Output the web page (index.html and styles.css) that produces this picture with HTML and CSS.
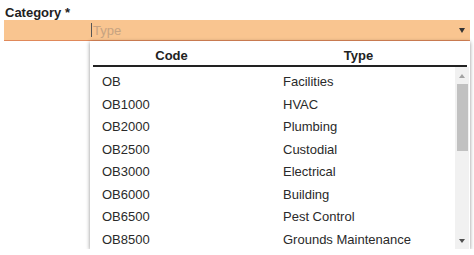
FILE: index.html
```html
<!DOCTYPE html>
<html lang="en">
<head>
  <meta charset="UTF-8">
  <title>Category</title>
  <link rel="stylesheet" href="styles.css">
</head>
<body>
  <div class="field">
    <label class="field-label">Category *</label>
    <div class="combo">
      <span class="caret"></span>
      <span class="placeholder">Type</span>
      <span class="combo-arrow"></span>
    </div>

    <!-- Dropdown list -->
    <div class="dropdown">
      <div class="dropdown-head">
        <div>Code</div>
        <div>Type</div>
      </div>
      <div class="dropdown-main">
        <div class="dropdown-body">
          <div class="row"><span class="cell-code">OB</span><span>Facilities</span></div>
          <div class="row"><span class="cell-code">OB1000</span><span>HVAC</span></div>
          <div class="row"><span class="cell-code">OB2000</span><span>Plumbing</span></div>
          <div class="row"><span class="cell-code">OB2500</span><span>Custodial</span></div>
          <div class="row"><span class="cell-code">OB3000</span><span>Electrical</span></div>
          <div class="row"><span class="cell-code">OB6000</span><span>Building</span></div>
          <div class="row"><span class="cell-code">OB6500</span><span>Pest Control</span></div>
          <div class="row"><span class="cell-code">OB8500</span><span>Grounds Maintenance</span></div>
        </div>
        <div class="scrollbar">
          <div class="scroll-btn"><span class="tri-up"></span></div>
          <div class="scroll-thumb"></div>
          <div class="scroll-space"></div>
          <div class="scroll-btn"><span class="tri-down"></span></div>
        </div>
      </div>
    </div>
  </div>
</body>
</html>
```

FILE: styles.css
```css
/* Reset */
* {
  margin: 0;
  padding: 0;
  box-sizing: border-box;
}

body {
  font-family: "Liberation Sans", Arial, sans-serif;
  color: #2a2a2a;
  background: #fff;
}

.field {
  padding: 0 4px;
}

.field-label {
  display: block;
  padding: 5px 0 0 1px;
  height: 20px;
  line-height: 15px;
  font-size: 13px;
  font-weight: bold;
  color: #222;
}

/* Combo input */
.combo {
  display: flex;
  align-items: center;
  height: 21px;
  padding-left: 87px;
  background-color: #f9c590;
  border-bottom: 1px solid #e0895a;
}

.caret {
  width: 1px;
  height: 14px;
  background-color: #555;
  margin-right: 1px;
}

.placeholder {
  flex: 1;
  font-size: 13px;
  color: #c7a381;
}

.combo-arrow {
  width: 0;
  height: 0;
  margin-right: 5px;
  border-left: 3.5px solid transparent;
  border-right: 3.5px solid transparent;
  border-top: 5px solid #333;
}

/* Dropdown */
.dropdown {
  display: flex;
  flex-direction: column;
  margin-left: 86px;
  width: 380px;
  height: 208px;
  padding: 0 3px;
  background: #fff;
  box-shadow: 0 1px 4px rgba(0, 0, 0, 0.45);
  overflow: hidden;
}

.dropdown-head {
  display: grid;
  grid-template-columns: 157px 1fr;
  flex: none;
  height: 26px;
  padding-top: 5px;
  line-height: 19px;
  font-size: 13px;
  font-weight: bold;
  color: #222;
  text-align: center;
  border-bottom: 2px solid #222;
}

.dropdown-main {
  display: flex;
  flex: 1;
  min-height: 0;
  margin-right: -2px;
}

.dropdown-body {
  flex: 1;
  padding-top: 4px;
  overflow: hidden;
}

.row {
  display: flex;
  height: 22.5px;
  line-height: 22.5px;
  font-size: 13px;
}

.cell-code {
  width: 190px;
  padding-left: 9px;
}

/* Scrollbar */
.scrollbar {
  width: 14px;
  display: flex;
  flex-direction: column;
  background-color: #f1f1f1;
}

.scroll-btn {
  height: 17px;
  display: flex;
  align-items: center;
  justify-content: center;
}

.tri-up {
  border-left: 3.5px solid transparent;
  border-right: 3.5px solid transparent;
  border-bottom: 4px solid #a3a3a3;
}

.tri-down {
  border-left: 3.5px solid transparent;
  border-right: 3.5px solid transparent;
  border-top: 4px solid #505050;
}

.scroll-thumb {
  height: 67px;
  margin: 0 1px 0 2px;
  background-color: #c1c1c1;
}

.scroll-space {
  flex: 1;
}
```
